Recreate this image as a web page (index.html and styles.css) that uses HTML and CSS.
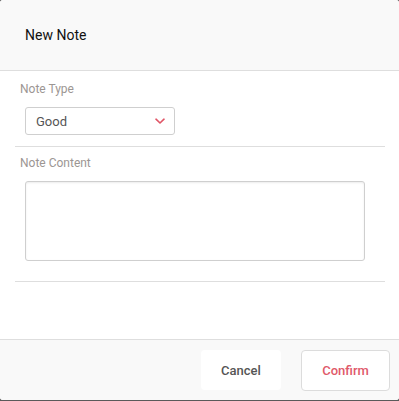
FILE: index.html
```html
<!DOCTYPE html>
<html>
<head>
<meta charset="utf-8">
<link rel="stylesheet" href="styles.css">
</head>
<body>
<div class="modal">
  <div class="modal-header">New Note</div>
  <div class="modal-body">
    <div class="group group-first">
      <div class="label">Note Type</div>
      <div class="select">
        <span>Good</span>
        <svg class="chev" width="10" height="7" viewBox="0 0 10 7"><path d="M1 1.2 L5 5 L9 1.2" fill="none" stroke="#e05566" stroke-width="1.6" stroke-linecap="round" stroke-linejoin="round"/></svg>
      </div>
    </div>
    <div class="group group-second">
      <div class="label">Note Content</div>
      <div class="textarea"></div>
    </div>
  </div>
  <div class="modal-footer">
    <button class="btn btn-cancel">Cancel</button>
    <button class="btn btn-confirm">Confirm</button>
  </div>
</div>
</body>
</html>
```

FILE: styles.css
```css
html, body {
  margin: 0;
  padding: 0;
  background: #5a5a5a;
}
body {
  font-family: Roboto, "Liberation Sans", Arial, sans-serif;
}
.modal {
  width: 399px;
  height: 400px;
  background: #fff;
  border-radius: 3px;
  overflow: hidden;
  display: flex;
  flex-direction: column;
}
.modal-header {
  height: 71px;
  box-sizing: border-box;
  background: #f9f9f9;
  border-bottom: 1px solid #dedede;
  padding-left: 25px;
  display: flex;
  align-items: center;
  font-size: 14px;
  color: #111;
}
.modal-body {
  padding: 0 14px 0 15px;
}
.group {
  border-bottom: 1px solid #dedede;
}
.group-first {
  padding: 9px 0 11px;
}
.group-second {
  padding: 7px 0 20px;
}
.label {
  padding-left: 5px;
  font-size: 12px;
  line-height: 18px;
  color: #9c9693;
}
.select {
  margin: 9px 0 0 10px;
  width: 150px;
  height: 28px;
  box-sizing: border-box;
  border: 1px solid #cfcfcf;
  border-radius: 3px;
  display: flex;
  align-items: center;
  justify-content: space-between;
  padding: 0 9px 0 10px;
  font-size: 13px;
  color: #555;
}
.chev {
  display: block;
}
.textarea {
  margin: 9px 0 0 10px;
  width: 340px;
  height: 80px;
  box-sizing: border-box;
  border: 1px solid #cfcfcf;
  border-radius: 3px;
  box-shadow: inset 0 1px 2px rgba(0,0,0,0.08);
}
.modal-footer {
  margin-top: auto;
  height: 61px;
  box-sizing: border-box;
  border-top: 1px solid #dedede;
  background: #f9f9f9;
  display: flex;
  align-items: center;
  justify-content: flex-end;
  gap: 20px;
  padding-right: 9px;
}
.btn {
  height: 40px;
  border-radius: 4px;
  background: #fff;
  font-family: Roboto, "Liberation Sans", Arial, sans-serif;
  font-size: 13px;
  font-weight: 500;
  cursor: pointer;
}
.btn-cancel {
  width: 80px;
  border: none;
  color: #555;
}
.btn-confirm {
  width: 89px;
  height: 41px;
  border: 1px solid #dcdcdc;
  color: #e0596a;
}
```
